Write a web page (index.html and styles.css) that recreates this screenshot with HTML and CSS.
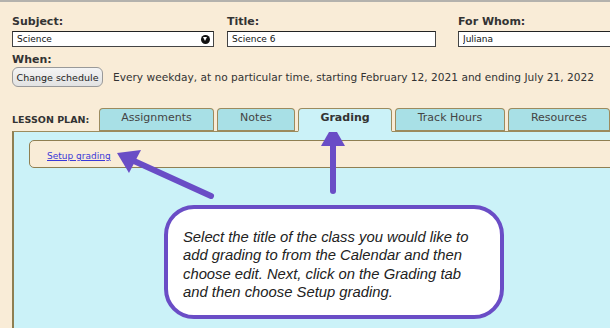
FILE: index.html
```html
<!DOCTYPE html>
<html lang="en">
<head>
  <meta charset="UTF-8" />
  <title>Edit class</title>
  <link rel="stylesheet" href="styles.css">
</head>
<body>
  <div class="page">
    <!-- class fields -->
    <div class="fields">
      <div class="field subject">
        <label>Subject:</label>
        <div class="select">
          <span>Science</span>
          <span class="select-arrow"></span>
        </div>
      </div>
      <div class="field title">
        <label>Title:</label>
        <input type="text" value="Science 6">
      </div>
      <div class="field whom">
        <label>For Whom:</label>
        <input type="text" value="Juliana">
      </div>
    </div>

    <div class="when">
      <label>When:</label>
      <div class="when-row">
        <button type="button">Change schedule</button>
        <span>Every weekday, at no particular time, starting February 12, 2021 and ending July 21, 2022</span>
      </div>
    </div>

    <!-- lesson plan tabs -->
    <div class="lesson">
      <span class="lesson-label">LESSON PLAN:</span>
      <div class="tabs">
        <div class="tab t-assign">Assignments</div>
        <div class="tab t-notes">Notes</div>
        <div class="tab t-grading active">Grading</div>
        <div class="tab t-hours">Track Hours</div>
        <div class="tab t-res">Resources</div>
      </div>
    </div>

    <div class="panel">
      <div class="grading-box">
        <a href="#">Setup grading</a>
      </div>
    </div>
  </div>

  <!-- annotation overlay -->
  <svg class="arrows" width="610" height="328" viewBox="0 0 610 328">
    <line x1="211" y1="196" x2="134" y2="161" stroke="#6a4dc6" stroke-width="6" stroke-linecap="round"/>
    <polygon points="117,153 141,150 129,173" fill="#6a4dc6"/>
    <line x1="333" y1="142" x2="333" y2="191" stroke="#6a4dc6" stroke-width="6" stroke-linecap="round"/>
    <polygon points="333,125 321,146 345,146" fill="#6a4dc6"/>
  </svg>
  <div class="callout">
    Select the title of the class you would like to add grading to from the Calendar and then choose edit. Next, click on the Grading tab and then choose Setup grading.
  </div>
</body>
</html>
```

FILE: styles.css
```css
html, body {
  margin: 0;
  overflow: hidden;
}
body {
  font-family: "DejaVu Sans", Verdana, sans-serif;
  background: #f9ecd7;
  color: #222;
  width: 610px;
  height: 328px;
  position: relative;
}
.page {
  border-top: 2px solid #b4b2ad;
  height: 326px;
  overflow: hidden;
}

/* fields */
.fields {
  display: flex;
  padding: 13px 0 0 12px;
}
.field {
  flex-shrink: 0;
}
.field label,
.when label {
  display: block;
  font-weight: bold;
  font-size: 11px;
  line-height: 13px;
  color: #333;
  margin-bottom: 1px;
}
.field label {
  margin-bottom: 3px;
}
.field.subject { width: 202px; margin-right: 13px; }
.field.title { width: 209px; margin-right: 22px; }
.field.whom { width: 170px; }
.select,
.field input {
  display: block;
  box-sizing: border-box;
  height: 16px;
  width: 100%;
  border: 1px solid #444;
  border-top-color: #222;
  background: #fff;
  font-family: "DejaVu Sans", Verdana, sans-serif;
  font-size: 9px;
  padding: 0 4px;
  margin: 0;
  color: #111;
}
.select {
  display: flex;
  align-items: center;
  justify-content: space-between;
  padding-right: 3px;
}
.select-arrow {
  width: 9px;
  height: 9px;
  border-radius: 50%;
  background: #111;
  position: relative;
}
.select-arrow::after {
  content: "";
  position: absolute;
  left: 2px;
  top: 2px;
  border-left: 2.5px solid transparent;
  border-right: 2.5px solid transparent;
  border-top: 4px solid #fff;
}

/* when */
.when {
  padding: 6px 0 0 12px;
}
.when-row {
  display: flex;
  align-items: center;
  gap: 10px;
  font-size: 10.6px;
  color: #333;
}
.when-row button {
  font-family: "DejaVu Sans", Verdana, sans-serif;
  font-size: 9.5px;
  height: 20px;
  width: 91px;
  padding: 0;
  border: 1px solid #999;
  border-radius: 6px;
  background: linear-gradient(#f4f4f4, #e2e2e2);
  color: #222;
}

/* tabs */
.lesson {
  display: flex;
  align-items: flex-end;
  margin-top: 21px;
  padding-left: 12px;
  height: 23px;
}
.lesson-label {
  width: 88px;
  font-size: 9.5px;
  font-weight: bold;
  color: #333;
  margin-bottom: 6px;
}
.tabs {
  display: flex;
  gap: 3px;
  margin-bottom: -1px;
  position: relative;
  z-index: 1;
}
.tab {
  box-sizing: border-box;
  height: 24px;
  border: 1px solid #9c8b5e;
  border-bottom: 2px solid #9c8b5e;
  border-radius: 4px 4px 0 0;
  background: #a8e0e6;
  font-size: 11px;
  color: #444;
  text-align: center;
  line-height: 18px;
}
.tab.active {
  background: #cbf2f8;
  border-bottom-color: #cbf2f8;
  font-weight: bold;
  color: #333;
}
.t-assign { width: 115px; }
.t-notes { width: 78px; }
.t-grading { width: 94px; }
.t-hours { width: 110px; }
.t-res { width: 102px; }

/* panel */
.panel {
  margin-left: 12px;
  margin-right: -30px;
  height: 200px;
  background: #cbf2f8;
  border-top: 1px solid #9c8b5e;
  border-left: 2px solid #8f7f52;
  padding: 8px 0 0 15px;
}
.grading-box {
  box-sizing: border-box;
  height: 28px;
  background: #f9ecd7;
  border: 1px solid #8f7f52;
  border-radius: 5px;
  padding: 7px 0 0 17px;
  line-height: 12px;
}
.grading-box a {
  font-size: 9px;
  color: #3a38d8;
  text-decoration: underline;
}

/* annotation */
.arrows {
  position: absolute;
  left: 0;
  top: 0;
  pointer-events: none;
}
.callout {
  position: absolute;
  left: 164px;
  top: 205px;
  width: 340px;
  height: 114px;
  box-sizing: border-box;
  border: 4px solid #6a4dc6;
  border-radius: 30px;
  background: #fff;
  padding: 19px 14px 0 15px;
  font-family: "Liberation Sans", Arial, sans-serif;
  font-style: italic;
  font-size: 14.8px;
  line-height: 18.4px;
  color: #222;
}
```
